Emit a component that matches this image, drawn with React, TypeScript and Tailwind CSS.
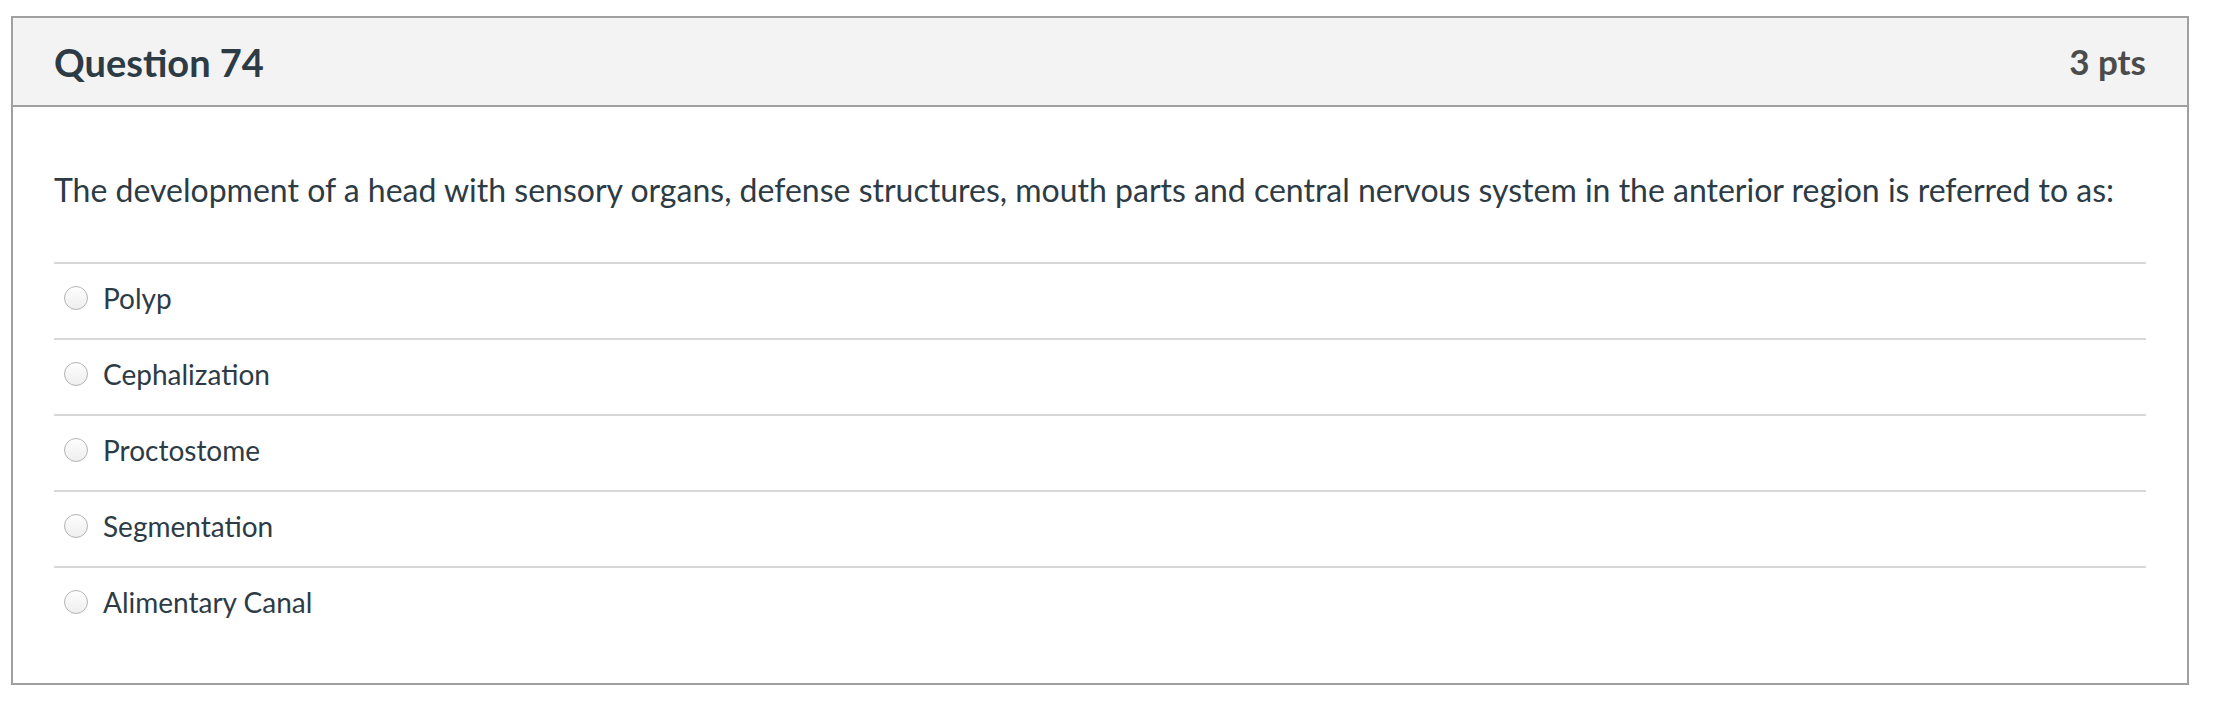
import React from 'react';

const answers = ['Polyp', 'Cephalization', 'Proctostome', 'Segmentation', 'Alimentary Canal'];

function Radio() {
  return (
    <span className="block h-[24px] w-[24px] shrink-0 rounded-full border border-[#b3b3b3] bg-gradient-to-b from-[#fefefe] to-[#eeeeee]" />
  );
}

export default function App() {
  return (
    <div className="min-h-screen bg-white pt-[16px] pl-[11px] text-[#2d3b45]" style={{ fontFamily: 'Lato, "Noto Sans", sans-serif' }}>
      <div className="w-[2178px] border-2 border-[#a0a0a0]">
        {/* header */}
        <div className="flex h-[89px] items-center justify-between border-b-2 border-[#a0a0a0] bg-[#f3f3f3] px-[41px]">
          <h2 className="text-[38px] font-bold leading-none">Question 74</h2>
          <span className="text-[35px] font-bold leading-none text-[#4b4b4b]">3 pts</span>
        </div>

        {/* body */}
        <div className="px-[41px] pt-[60px] pb-[41px]">
          <p className="text-[32px] leading-[45px]">
            The development of a head with sensory organs, defense structures, mouth parts and central nervous system in the anterior region is referred to as:
          </p>
          <div className="mt-[50px]">
            {answers.map((a) => (
              <label key={a} className="flex h-[76px] items-center border-t-2 border-[#d7d7d7] pb-[6px] pl-[10px]">
                <Radio />
                <span className="ml-[15px] text-[28px] leading-none">{a}</span>
              </label>
            ))}
          </div>
        </div>
      </div>
    </div>
  );
}
